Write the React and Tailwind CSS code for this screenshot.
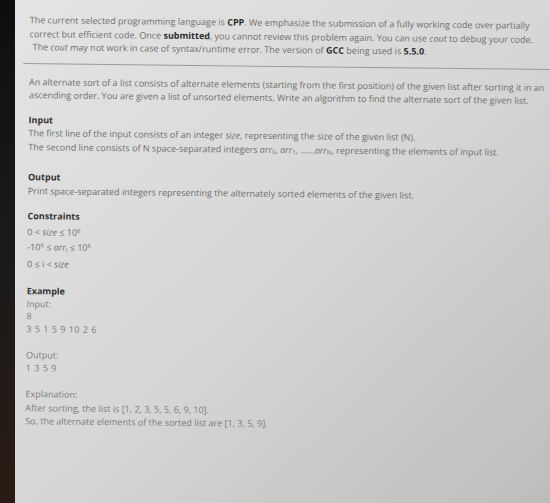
export default function App() {
  const f = { fontFamily: '"Open Sans", "Noto Sans", sans-serif' };
  const B = ({ children }) => <b className="text-[#2e2e2e]">{children}</b>;
  return (
    <div className="w-[550px] h-[503px] overflow-hidden flex bg-[#151515]" style={f}>
      <div className="w-[15px] h-full bg-linear-to-b from-[#0e0e0e] via-[#1a1a1a] to-[#2a1c14]" />
      <div className="flex-1 h-full bg-linear-to-br from-[#e3e4e3] via-[#d6d7d6] to-[#bdbebc] overflow-hidden">
        <div className="origin-top-left rotate-[0.65deg] pt-[13px] pl-[15px] text-[9px] leading-[13.5px] text-[#6e6f6e] w-[600px] whitespace-nowrap">
          <div>The current selected programming language is <B>CPP</B>. We emphasize the submission of a fully working code over partially</div>
          <div>correct but efficient code. Once <B>submitted</B>, you cannot review this problem again. You can use <i>cout</i> to debug your code.</div>
          <div className="pl-[3px]">The <i>cout</i> may not work in case of syntax/runtime error. The version of <B>GCC</B> being used is <B>5.5.0</B>.</div>
          <div className="mt-[9px] -ml-[6px] w-[560px] h-px bg-[#9a9b9a]" />
          <div className="mt-[11px]">An alternate sort of a list consists of alternate elements (starting from the first position) of the given list after sorting it in an</div>
          <div>ascending order. You are given a list of unsorted elements. Write an algorithm to find the alternate sort of the given list.</div>
          <div className="mt-[11px]">
            <div className="font-bold text-[#333]">Input</div>
            <div>The first line of the input consists of an integer <i>size</i>, representing the size of the given list (N).</div>
            <div className="h-[13.5px]">
              The second line consists of N space-separated integers <i>arr</i><sub className="text-[6px]">0</sub>, <i>arr</i><sub className="text-[6px]">1</sub>, ......<i>arr</i><sub className="text-[6px]">N</sub>, representing the elements of input list.
            </div>
          </div>
          <div className="mt-[17px]">
            <div className="font-bold text-[#333]">Output</div>
            <div>Print space-separated integers representing the alternately sorted elements of the given list.</div>
          </div>
          <div className="mt-[12px] leading-[15.5px]">
            <div className="font-bold text-[#333] leading-[13.5px] mb-[1px]">Constraints</div>
            <div className="h-[15.5px]">0 &lt; <i>size</i> ≤ 10<sup className="text-[6px]">6</sup></div>
            <div className="h-[15.5px]">-10<sup className="text-[6px]">6</sup> ≤ <i>arr</i><sub className="text-[6px]">i</sub> ≤ 10<sup className="text-[6px]">6</sup></div>
            <div className="mt-[1px]">0 ≤ i &lt; <i>size</i></div>
          </div>
          <div className="mt-[14px] leading-[12.7px] text-[#7c7d7c]">
            <div className="font-bold text-[#333]">Example</div>
            <div>Input:</div>
            <div>8</div>
            <div className="tracking-[0.5px]">3 5 1 5 9 10 2 6</div>
            <div className="mt-[13px]">Output:</div>
            <div className="tracking-[0.5px]">1 3 5 9</div>
            <div className="mt-[14px]">Explanation:</div>
            <div className="leading-[13.5px]">After sorting, the list is [1, 2, 3, 5, 5, 6, 9, 10].</div>
            <div className="leading-[13.5px]">So, the alternate elements of the sorted list are [1, 3, 5, 9].</div>
          </div>
        </div>
      </div>
    </div>
  );
}
